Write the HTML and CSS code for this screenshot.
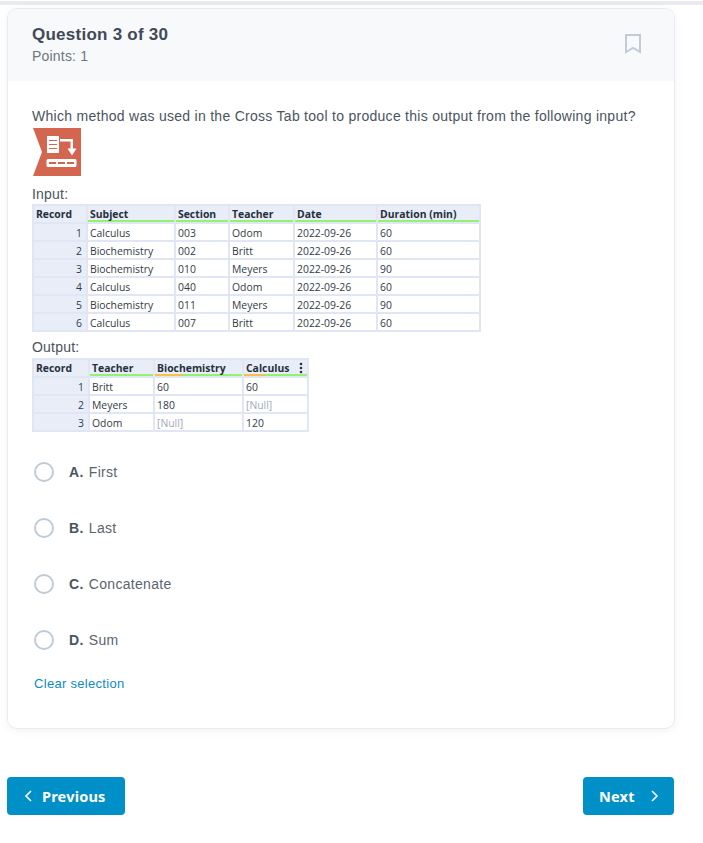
FILE: index.html
```html
<html>
<head>
    <meta charset="UTF-8">
    <meta name="viewport" content="width=device-width, initial-scale=1.0">
    <title>Question 3 of 30</title>
    <link rel="stylesheet" href="styles.css">
</head>
<body>
    <div class="top-bar"></div>

    <div class="card">
        <div class="card-head">
            <div>
                <h2>Question 3 of 30</h2>
                <div class="points">Points: 1</div>
            </div>
            <svg class="bookmark" width="18" height="22" viewBox="0 0 18 22" fill="none" stroke="#c3ccd5" stroke-width="2">
                <path d="M2 2h14v17l-7-4-7 4z"/>
            </svg>
        </div>

        <div class="card-body">
            <p class="question">Which method was used in the Cross Tab tool to produce this output from the following input?</p>

            <svg class="tool-icon" width="49" height="48" viewBox="0 0 49 48">
                <path d="M1 0h48v48H1l9-24z" fill="#d4664f"/>
                <g fill="#fff">
                    <path d="M15 8h12v17H15zM17 12v1h8v-1zM17 16v1h8v-1zM17 20v1h8v-1z" fill-rule="evenodd"/>
                    <path d="M28 11h12v2.500H28z"/>
                    <path d="M38.500 11H41v10h-2.500z"/>
                    <path d="M35.500 20.500h9L40 27.500z"/>
                    <path d="M16 31h27q1.500 0 1.500 1.500v5q0 1.500-1.500 1.500H16q-1.500 0-1.500-1.500v-5q0-1.500 1.500-1.500zM17 34v2h7v-2zM26 34v2h7v-2zM35 34v2h7v-2z" fill-rule="evenodd"/>
                </g>
            </svg>

            <div class="data-label">Input:</div>
            <table class="grid grid-input">
                <tr>
                    <th>Record</th>
                    <th class="green">Subject</th>
                    <th class="green">Section</th>
                    <th class="green">Teacher</th>
                    <th class="green">Date</th>
                    <th class="green">Duration (min)</th>
                </tr>
                <tr><td class="num">1</td><td>Calculus</td><td>003</td><td>Odom</td><td>2022-09-26</td><td>60</td></tr>
                <tr><td class="num">2</td><td>Biochemistry</td><td>002</td><td>Britt</td><td>2022-09-26</td><td>60</td></tr>
                <tr><td class="num">3</td><td>Biochemistry</td><td>010</td><td>Meyers</td><td>2022-09-26</td><td>90</td></tr>
                <tr><td class="num">4</td><td>Calculus</td><td>040</td><td>Odom</td><td>2022-09-26</td><td>60</td></tr>
                <tr><td class="num">5</td><td>Biochemistry</td><td>011</td><td>Meyers</td><td>2022-09-26</td><td>90</td></tr>
                <tr><td class="num">6</td><td>Calculus</td><td>007</td><td>Britt</td><td>2022-09-26</td><td>60</td></tr>
            </table>

            <div class="data-label data-label-output">Output:</div>
            <table class="grid grid-output">
                <tr>
                    <th>Record</th>
                    <th class="green">Teacher</th>
                    <th class="mixed">Biochemistry</th>
                    <th class="mixed mixed-short menu-col">Calculus
                        <svg class="dots" width="4" height="12" viewBox="0 0 4 12" fill="#2b3440">
                            <circle cx="2" cy="2" r="1.300"/>
                            <circle cx="2" cy="6" r="1.300"/>
                            <circle cx="2" cy="10" r="1.300"/>
                        </svg>
                    </th>
                </tr>
                <tr><td class="num">1</td><td>Britt</td><td>60</td><td>60</td></tr>
                <tr><td class="num">2</td><td>Meyers</td><td>180</td><td class="null">[Null]</td></tr>
                <tr><td class="num">3</td><td>Odom</td><td class="null">[Null]</td><td>120</td></tr>
            </table>

            <div class="options">
                <label class="option"><span class="radio"></span><span><b>A.</b> First</span></label>
                <label class="option"><span class="radio"></span><span><b>B.</b> Last</span></label>
                <label class="option"><span class="radio"></span><span><b>C.</b> Concatenate</span></label>
                <label class="option"><span class="radio"></span><span><b>D.</b> Sum</span></label>
            </div>

            <a class="clear" href="#">Clear selection</a>
        </div>
    </div>

    <div class="nav">
        <button class="btn btn-prev">
            <svg width="8" height="12" viewBox="0 0 8 12" fill="none" stroke="#fff" stroke-width="1.600"><path d="M7 1 2 6l5 5"/></svg>
            Previous
        </button>
        <button class="btn btn-next">
            Next
            <svg width="8" height="12" viewBox="0 0 8 12" fill="none" stroke="#fff" stroke-width="1.600"><path d="m1 1 5 5-5 5"/></svg>
        </button>
    </div>
</body>
</html>
```

FILE: styles.css
```css
body {
    font-family: 'Liberation Sans', Arial, sans-serif;
    margin: 0;
    background-color: #fff;
    color: #4a5461;
}

.top-bar {
    height: 4px;
    margin-top: 1px;
    background-color: #e9ebee;
}

.card {
    width: 668px;
    height: 721px;
    margin: 3px 0 0 7px;
    box-sizing: border-box;
    border: 1px solid #e8ebef;
    border-radius: 10px;
    box-shadow: 0 2px 10px rgba(0,0,0,0.05);
    overflow: hidden;
    background: white;
}

.card-head {
    display: flex;
    justify-content: space-between;
    align-items: center;
    height: 72px;
    box-sizing: border-box;
    padding: 0 32px 2px 24px;
    background-color: #f8f9fb;
}

.card-head h2 {
    margin: 0 0 1px;
    font-size: 17px;
    line-height: 22px;
    color: #3f4a57;
    letter-spacing: 0.25px;
}

.points {
    font-size: 14px;
    line-height: 18px;
    color: #6b7683;
    letter-spacing: 0.2px;
}

.card-body {
    padding: 26px 0 0 24px;
}

.question {
    margin: 0;
    font-size: 14px;
    line-height: 18px;
    letter-spacing: 0.28px;
}

.tool-icon {
    display: block;
    margin: 3px 0 0 0;
}

.data-label {
    margin-top: 9px;
    font-size: 14px;
    line-height: 18px;
    letter-spacing: 0.2px;
}

.data-label-output {
    margin-top: 6px;
}

.grid {
    border-collapse: collapse;
    table-layout: fixed;
    font-family: 'Open Sans', 'Noto Sans', sans-serif;
    font-size: 10.400px;
    color: #333a48;
}

.grid-input {
    width: 449px;
    margin-top: 1px;
}

.grid-output {
    width: 277px;
    margin-top: 2px;
}

.grid th,
.grid td {
    height: 18px;
    padding: 0 2px;
    box-sizing: border-box;
    border: 2px solid #e0e6f3;
    text-align: left;
    white-space: nowrap;
    overflow: hidden;
}

.grid td {
    padding-top: 2px;
}

.grid th {
    background-color: #e8edf8;
    font-weight: 700;
    color: #26303c;
}

.grid th.green {
    background-image: linear-gradient(#94f36e, #94f36e);
    background-repeat: no-repeat;
    background-size: 100% 2px;
    background-position: left bottom;
}

.grid th.mixed {
    background-image: linear-gradient(#f6c244, #f6c244), linear-gradient(#94f36e, #94f36e);
    background-repeat: no-repeat;
    background-size: 28px 2px, 100% 2px;
    background-position: left bottom;
}

.grid th.mixed-short {
    background-size: 21px 2px, 100% 2px;
}

.grid td.num {
    padding-right: 4px;
    background-color: #e8edf8;
    text-align: right;
}

.grid td.null {
    color: #a3a9bb;
}

.grid-input th:nth-child(1) { width: 54px; }
.grid-input th:nth-child(2) { width: 88px; }
.grid-input th:nth-child(3) { width: 54px; }
.grid-input th:nth-child(4) { width: 65px; }
.grid-input th:nth-child(5) { width: 83px; }

.grid-output th:nth-child(1) { width: 56px; }
.grid-output th:nth-child(2) { width: 65px; }
.grid-output th:nth-child(3) { width: 89px; }

.menu-col {
    position: relative;
}

.dots {
    position: absolute;
    right: 4px;
    top: 2px;
}

.options {
    margin-top: 12px;
}

.option {
    display: flex;
    align-items: center;
    gap: 15px;
    height: 56px;
    padding-left: 2px;
    font-size: 14px;
    letter-spacing: 0.3px;
    color: #5a6470;
}

.option b {
    margin-right: 1px;
    color: #4a5461;
}

.radio {
    width: 20px;
    height: 20px;
    box-sizing: border-box;
    border: 2px solid #bfcbd6;
    border-radius: 50%;
}

.clear {
    display: block;
    margin: 7px 0 0 2px;
    font-size: 13px;
    line-height: 18px;
    letter-spacing: 0.3px;
    color: #0d8ac4;
    text-decoration: none;
}

.nav {
    display: flex;
    justify-content: space-between;
    width: 667px;
    margin: 48px 0 0 7px;
}

.btn {
    display: flex;
    align-items: center;
    height: 38px;
    box-sizing: border-box;
    border: none;
    border-radius: 4px;
    background-color: #0090c8;
    color: white;
    font-family: 'Noto Sans', 'Open Sans', sans-serif;
    font-size: 14.500px;
    font-weight: 700;
    letter-spacing: 0.2px;
    cursor: pointer;
}

.btn-prev {
    width: 118px;
    padding: 0 0 0 17px;
    gap: 10px;
}

.btn-next {
    width: 91px;
    padding: 0 0 0 16px;
    gap: 16px;
}

@media (max-width: 600px) {
    .card {
        width: auto;
    }
}
```
